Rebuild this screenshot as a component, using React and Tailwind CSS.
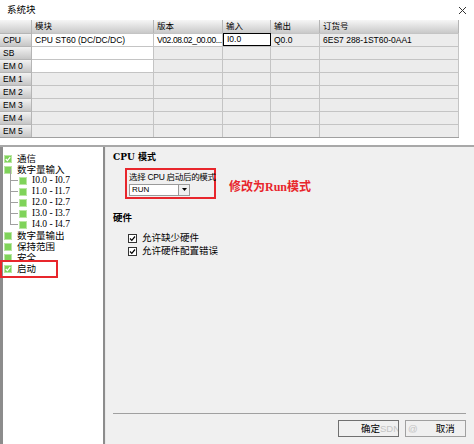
const FONT = { fontFamily: '"Liberation Sans", "Noto Sans CJK SC", sans-serif' }
const SERIF = { fontFamily: '"Liberation Serif", "Noto Sans CJK SC", serif' }

const COLS = 'grid-cols-[32px_122px_69px_48px_49px_139px]'
const ROWS = ['CPU', 'SB', 'EM 0', 'EM 1', 'EM 2', 'EM 3', 'EM 4', 'EM 5']

function TreeIcon({ checked }) {
  return (
    <span className="w-[8px] h-[8px] bg-[#7fd35a] border border-[#b9e6a2] flex items-center justify-center shrink-0">
      {checked && (
        <svg width="6" height="6" viewBox="0 0 6 6">
          <path d="M0.8 3 L2.4 4.6 L5.2 1.2" stroke="#fff" strokeWidth="1.2" fill="none" />
        </svg>
      )}
    </span>
  )
}

function TreeItem({ label, checked, child, last }) {
  return (
    <div className="relative flex items-center h-[11px] gap-[5px]" style={{ paddingLeft: child ? 16 : 1 }}>
      {child && (
        <>
          <span className={`absolute left-[7px] top-[-6px] w-px bg-[#a0a0a0] ${last ? 'h-[11px]' : 'h-[17px]'}`} />
          <span className="absolute left-[7px] top-[5px] w-[8px] h-px bg-[#a0a0a0]" />
        </>
      )}
      <TreeIcon checked={checked} />
      <span className="text-[9.5px] leading-none text-black whitespace-nowrap" style={child ? SERIF : FONT}>{label}</span>
    </div>
  )
}

function Checkbox({ label }) {
  return (
    <div className="flex items-center gap-[5px] h-[13px]">
      <span className="w-[9px] h-[9px] border border-[#333] bg-white flex items-center justify-center">
        <svg width="7" height="7" viewBox="0 0 7 7">
          <path d="M1 3.5 L2.8 5.3 L6 1.5" stroke="#000" strokeWidth="1.2" fill="none" />
        </svg>
      </span>
      <span className="text-[9.5px] leading-none">{label}</span>
    </div>
  )
}

export default function App() {
  return (
    <div className="w-[474px] h-[444px] bg-[#f0f0f0] overflow-hidden flex flex-col text-black" style={FONT}>

      {/* ── Title ── */}
      <div className="h-[20px] bg-white flex items-center justify-between pl-[7px] pr-[7px] shrink-0">
        <span className="text-[9.5px] leading-none">系统块</span>
        <svg width="9" height="9" viewBox="0 0 9 9">
          <path d="M1 1 L8 8 M8 1 L1 8" stroke="#333" strokeWidth="1" />
        </svg>
      </div>

      {/* ── Module table ── */}
      <div className="bg-white pr-[15px] shrink-0">
        <div className={`grid ${COLS} w-[459px] border-r border-b border-[#a0a0a0] bg-[#ececec] text-[8.5px] leading-none`}>
          <div className="h-[13px] bg-gradient-to-b from-[#f6f6f6] to-[#c9c9c9] border-r border-[#b5b5b5]" />
          {['模块', '版本', '输入', '输出', '订货号'].map(h => (
            <div key={h} className="h-[13px] flex items-center px-[3px] bg-gradient-to-b from-[#f6f6f6] to-[#c9c9c9] border-r border-[#b5b5b5]">
              {h}
            </div>
          ))}
          {ROWS.map((r, i) => (
            <Row key={r} name={r} index={i} />
          ))}
        </div>
      </div>
      <div className="h-[9px] bg-white shrink-0 border-b-2 border-[#a8a8a8]" />

      {/* ── Bottom ── */}
      <div className="flex flex-1 min-h-0">
        <div className="w-[105px] bg-white border-l-[3px] border-r-[2px] border-[#8c8c8c] pt-[6px]">
          <TreeItem label="通信" checked />
          <TreeItem label="数字量输入" />
          <TreeItem label="I0.0 - I0.7" child />
          <TreeItem label="I1.0 - I1.7" child />
          <TreeItem label="I2.0 - I2.7" child />
          <TreeItem label="I3.0 - I3.7" child />
          <TreeItem label="I4.0 - I4.7" child last />
          <TreeItem label="数字量输出" />
          <TreeItem label="保持范围" />
          <TreeItem label="安全" />
          <div className="relative">
            <TreeItem label="启动" checked />
            <span className="absolute left-[-3px] top-[-3px] w-[58px] h-[18px] border-2 border-[#e8262c]" />
          </div>
        </div>

        <div className="flex-1 flex flex-col pl-[7px] pr-[8px] pt-[6px] border-l border-[#e8e8e8]">
          <div className="text-[9px] font-bold leading-none" style={{ fontFamily: '"DejaVu Serif", "Noto Sans CJK SC", serif' }}>
            CPU <span style={FONT}>模式</span>
          </div>

          <div className="flex items-center mt-[6px] ml-[12px]">
            <div className="w-[91px] h-[31px] border-2 border-[#e8262c] px-[2px] pt-[3px] flex flex-col gap-[2px]">
              <span className="text-[8.5px] leading-none whitespace-nowrap tracking-[-0.3px]">选择 CPU 启动后的模式</span>
              <div className="w-[61px] h-[12px] bg-white border border-[#9a9a9a] flex items-center justify-between pl-[2px]">
                <span className="text-[8px] leading-none">RUN</span>
                <span className="w-[11px] h-full bg-[#f0f0f0] border-l border-[#9a9a9a] flex items-center justify-center">
                  <svg width="5" height="3" viewBox="0 0 5 3"><path d="M0 0 H5 L2.5 3 Z" fill="#000" /></svg>
                </span>
              </div>
            </div>
            <span className="ml-[13px] mt-[6px] text-[12px] font-bold text-[#e8262c] leading-none whitespace-nowrap" style={SERIF}>
              修改为Run模式
            </span>
          </div>

          <div className="text-[9.5px] font-bold leading-none mt-[14px]">硬件</div>
          <div className="mt-[9px] ml-[15px] flex flex-col">
            <Checkbox label="允许缺少硬件" />
            <Checkbox label="允许硬件配置错误" />
          </div>

          <div className="mt-auto border-t border-[#a0a0a0] mb-[6px]" />
          <div className="flex justify-end gap-[6px] mb-[7px]">
            <button className="w-[61px] h-[17px] bg-[#f0f0f0] border border-[#707070] text-[9.5px] leading-none flex items-center pl-[22px] whitespace-nowrap overflow-hidden">
              <span>确定</span>
              <span className="text-[#c4c4c4]">SDN</span>
            </button>
            <button className="w-[61px] h-[17px] bg-[#f0f0f0] border border-[#a0a0a0] text-[9.5px] leading-none flex items-center pl-[2px] whitespace-nowrap overflow-hidden">
              <span className="text-[#c4c4c4]">@</span>
              <span className="ml-[18px]">取消</span>
            </button>
          </div>
        </div>
      </div>
    </div>
  )
}

function Row({ name, index }) {
  const whiteModule = index <= 2
  const cpu = index === 0
  const cell = 'h-[13px] flex items-center px-[3px] border-r border-t border-[#c4c4c4] whitespace-nowrap overflow-hidden'
  return (
    <>
      <div className="h-[13px] flex items-center px-[3px] bg-gradient-to-b from-[#f2f2f2] to-[#c6c6c6] border-r border-t border-[#b5b5b5]">{name}</div>
      <div className={`${cell} ${whiteModule ? 'bg-white' : ''}`}>{cpu ? 'CPU ST60 (DC/DC/DC)' : ''}</div>
      <div className={`${cell} ${cpu ? 'bg-white tracking-[-0.4px]' : ''}`}>{cpu ? 'V02.08.02_00.00...' : ''}</div>
      <div className={`${cell} ${cpu ? 'bg-white border border-black' : ''}`}>{cpu ? 'I0.0' : ''}</div>
      <div className={cell}>{cpu ? 'Q0.0' : ''}</div>
      <div className={cell}>{cpu ? '6ES7 288-1ST60-0AA1' : ''}</div>
    </>
  )
}
